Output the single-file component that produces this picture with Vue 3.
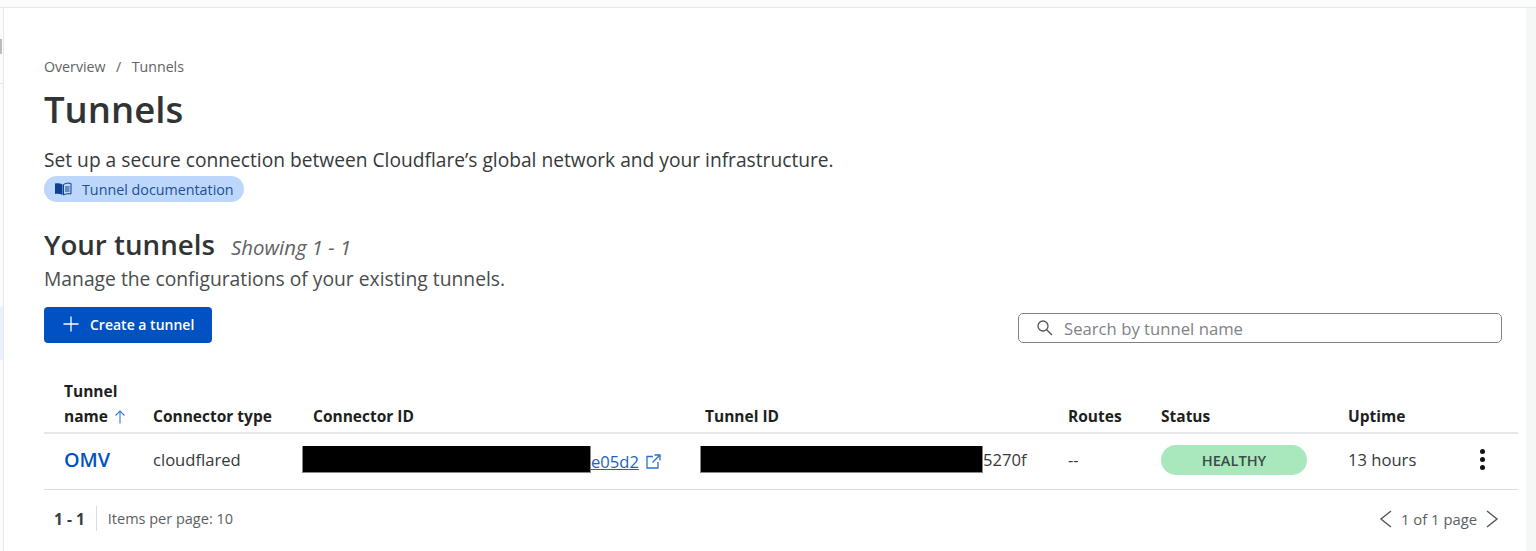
<script setup>
const columns = ['Connector type', 'Connector ID', 'Tunnel ID', 'Routes', 'Status', 'Uptime']
</script>

<template>
  <div class="page">
    <div class="top-edge"></div>
    <div class="body">
      <div class="rail">
        <span class="rail-tick"></span>
        <span class="rail-line"></span>
        <span class="rail-sel"></span>
      </div>
      <main class="content">
        <nav class="crumbs"><span>Overview</span><span class="sep">/</span><span>Tunnels</span></nav>
        <h1>Tunnels</h1>
        <p class="lead">Set up a secure connection between Cloudflare’s global network and your infrastructure.</p>
        <a class="doc-pill">
          <svg width="18" height="14" viewBox="0 0 18 14">
            <path d="M1 1.500c2.500-.6 5-.5 7.500 1V13c-2.500-1.400-5-1.500-7.500-1z" fill="#0b3f8f" />
            <path d="M9.500 2.500c2.400-1.500 5-1.600 7.500-1V12c-2.500-.5-5-.4-7.500 1z" fill="none" stroke="#0b3f8f" />
            <path d="M11 5h4.500M11 7h4.500M11 9h4.500" stroke="#0b3f8f" />
          </svg>
          <span>Tunnel documentation</span>
        </a>

        <div class="section-title">
          <h2>Your tunnels</h2>
          <em>Showing 1 - 1</em>
        </div>
        <p class="sub">Manage the configurations of your existing tunnels.</p>

        <div class="toolbar">
          <button class="create">
            <svg width="16" height="16" viewBox="0 0 16 16"><path d="M8 0.500v15M0.500 8h15" stroke="#fff" stroke-width="1.300" /></svg>
            <span>Create a tunnel</span>
          </button>
          <label class="search">
            <svg width="18" height="18" viewBox="0 0 18 18" fill="none" stroke="#555" stroke-width="1.300">
              <circle cx="7" cy="7" r="5" /><path d="M10.700 10.700 16 16" />
            </svg>
            <span>Search by tunnel name</span>
          </label>
        </div>

        <div class="table">
          <div class="row head">
            <div class="cell first">Tunnel<br />name <svg class="sort" width="12" height="14" viewBox="0 0 12 14" fill="none" stroke="#2c7cd6" stroke-width="1.100"><path d="M6 13.500V1M1.500 5.500 6 1l4.500 4.500" /></svg></div>
            <div v-for="c in columns" :key="c" class="cell">{{ c }}</div>
            <div class="cell"></div>
          </div>
          <div class="row data">
            <div class="cell first"><a class="name">OMV</a></div>
            <div class="cell">cloudflared</div>
            <div class="cell conn">
              <span class="mask mask-a"></span><a class="id-link">e05d2</a>
              <svg class="ext" width="15" height="15" viewBox="0 0 15 15" fill="none" stroke="#2c6fd0" stroke-width="1.300"><path d="M7 2.500H1v11.500h11V8M8.500 1H14v5.500M14 1 6.500 8.500" /></svg>
            </div>
            <div class="cell tid"><span class="mask mask-b"></span><span>5270f</span></div>
            <div class="cell">--</div>
            <div class="cell"><span class="badge">HEALTHY</span></div>
            <div class="cell">13 hours</div>
            <div class="cell dots"><i></i><i></i><i></i></div>
          </div>
        </div>

        <footer class="pager">
          <div class="pager-left"><b>1 - 1</b><span class="divider"></span><span>Items per page: 10</span></div>
          <div class="pager-right">
            <svg width="13" height="18" viewBox="0 0 13 18" fill="none" stroke="#555" stroke-width="1.400"><path d="M12 1 2 9l10 8" /></svg>
            <span>1 of 1 page</span>
            <svg width="13" height="18" viewBox="0 0 13 18" fill="none" stroke="#555" stroke-width="1.400"><path d="M1 1l10 8-10 8" /></svg>
          </div>
        </footer>
      </main>
      <div class="scroll"></div>
    </div>
  </div>
</template>

<style scoped>
.page {
  width: 1536px;
  height: 551px;
  overflow: hidden;
  display: flex;
  flex-direction: column;
  background: #fff;
  font-family: "Open Sans", "Noto Sans", sans-serif;
  color: #36393a;
}
.top-edge {
  height: 8px;
  flex: none;
  box-sizing: border-box;
  border-bottom: 1px solid #e6e7e7;
  background: #fbfbfb;
}
.body {
  flex: 1;
  display: flex;
  min-height: 0;
}
.rail {
  width: 3px;
  flex: none;
  background: #fbfbfb;
  border-right: 1px solid #e6e7e7;
  display: flex;
  flex-direction: column;
}
.rail-tick {
  height: 15px;
  margin-top: 31px;
  width: 2px;
  background: #bbb;
}
.rail-line {
  height: 1px;
  margin-top: 29px;
  background: #e6e7e7;
}
.rail-sel {
  height: 53px;
  margin-top: 223px;
  background: #e8f1fc;
}
.content {
  width: 1522px;
  flex: none;
  box-sizing: border-box;
  padding: 49px 18px 0 40px;
}
.crumbs {
  display: flex;
  gap: 10.500px;
  font-size: 14.200px;
  line-height: 20px;
  color: #5f6263;
}
h1 {
  margin: 7px 0 0;
  font-size: 36.500px;
  line-height: 50px;
  font-weight: 600;
  color: #313435;
}
.lead {
  margin: 13px 0 0;
  font-size: 19.200px;
  line-height: 26px;
}
.doc-pill {
  display: inline-flex;
  align-items: center;
  gap: 10px;
  height: 26px;
  box-sizing: border-box;
  margin-top: 3px;
  padding: 0 10px;
  border-radius: 13px;
  background: #bcd7fb;
  color: #1d4f91;
  font-size: 14.300px;
}
.section-title {
  display: flex;
  align-items: baseline;
  gap: 16px;
  margin-top: 23px;
}
h2 {
  margin: 0;
  font-size: 27.700px;
  line-height: 38px;
  font-weight: 600;
  color: #313435;
}
.section-title em {
  font-size: 20.400px;
  color: #5f6263;
}
.sub {
  margin: 3px 0 0;
  font-size: 19.300px;
  line-height: 26px;
  color: #4a4d4e;
}
.toolbar {
  display: flex;
  justify-content: space-between;
  align-items: flex-end;
  margin-top: 15px;
  width: 1458px;
}
.create {
  display: flex;
  align-items: center;
  gap: 11px;
  height: 36px;
  width: 168px;
  box-sizing: border-box;
  padding: 0 0 2px 19px;
  border: 0;
  border-radius: 4px;
  background: #0051c3;
  color: #fff;
  font: 600 14px "Open Sans", sans-serif;
}
.search {
  display: flex;
  align-items: center;
  gap: 10px;
  width: 484px;
  height: 30px;
  box-sizing: border-box;
  padding-left: 17px;
  border: 1px solid #808285;
  border-radius: 5px;
  font-size: 16.700px;
  color: #808285;
}
.table {
  margin-top: 36px;
  width: 1474px;
}
.row {
  display: grid;
  grid-template-columns: 109px 160px 392px 363px 93px 187px 132px 1fr;
}
.head {
  align-items: end;
  font-size: 15.500px;
  font-weight: 700;
  line-height: 25px;
  color: #1d1f20;
  padding-bottom: 3px;
  border-bottom: 2px solid #e6e7e7;
}
.first {
  padding-left: 20px;
}
.sort {
  margin-left: 2px;
  vertical-align: -2px;
}
.data {
  height: 51px;
  padding-bottom: 4px;
  align-items: center;
  font-size: 16.600px;
  border-bottom: 1px solid #dcdddd;
}
.name {
  color: #0051c3;
  font-size: 19.800px;
  font-weight: 600;
}
.conn {
  display: flex;
  align-items: center;
  margin-left: -11px;
}
.mask {
  display: block;
  flex: none;
  height: 26px;
  background: #000;
  border: 1px solid #888;
  border-width: 0 1px 1px 1px;
}
.mask-a {
  width: 287px;
}
.mask-b {
  width: 281px;
}
.id-link {
  padding-top: 4px;
  color: #1f62c4;
  text-decoration: underline;
}
.ext {
  margin-left: 7px;
  margin-top: 4px;
}
.tid {
  display: flex;
  align-items: center;
  margin-left: -5px;
}
.badge {
  display: block;
  width: 146px;
  height: 30px;
  line-height: 30px;
  text-align: center;
  border-radius: 15px;
  background: #a9e8bd;
  font-size: 14.600px;
  font-weight: 600;
  color: #3d4a48;
}
.dots {
  display: flex;
  flex-direction: column;
  align-items: flex-start;
  gap: 3px;
}
.dots i {
  width: 5px;
  height: 5px;
  border-radius: 50%;
  background: #111;
}
.pager {
  display: flex;
  justify-content: space-between;
  align-items: center;
  width: 1458px;
  margin-top: 16px;
  font-size: 14.500px;
  color: #5b5e5f;
}
.pager-left {
  display: flex;
  align-items: center;
  padding-left: 10px;
}
.pager-left b {
  font-size: 15.500px;
  color: #3a3d3e;
}
.divider {
  width: 1px;
  height: 25px;
  margin: 0 11px;
  background: #dcdddd;
}
.pager-right {
  display: flex;
  align-items: center;
  gap: 9px;
  padding-right: 3px;
  font-size: 14.800px;
}
.scroll {
  flex: 1;
  background: #f5f6f6;
}
</style>

<style>
body { margin: 0; }
</style>
